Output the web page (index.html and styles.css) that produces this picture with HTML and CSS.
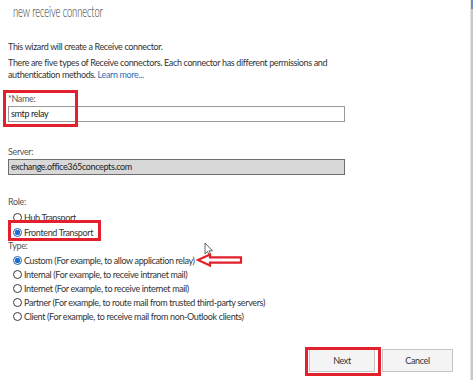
FILE: index.html
```html
<!DOCTYPE html>
<html>
<head>
<meta charset="utf-8">
<link rel="stylesheet" href="styles.css">
</head>
<body>
<div class="window">
  <div class="main">
    <h1 class="title">new receive connector</h1>
    <div class="content">
      <p class="intro">This wizard will create a Receive connector.</p>
      <p class="intro2">There are five types of Receive connectors. Each connector has different permissions and<br>authentication methods. <a class="link">Learn more...</a></p>

      <div class="field name-field">
        <div class="label">*Name:</div>
        <div class="input">smtp relay</div>
        <div class="mark mark-name"></div>
      </div>

      <div class="field server-field">
        <div class="label">Server:</div>
        <div class="input disabled">exchange.office365concepts.com</div>
      </div>

      <div class="group role">
        <div class="label">Role:</div>
        <div class="radio"><span class="dot"></span>Hub Transport</div>
        <div class="radio checked"><span class="dot"></span>Frontend Transport</div>
        <div class="mark mark-role"></div>
        <svg class="cursor" width="10" height="15" viewBox="0 0 10 15"><path d="M1 1 L1 12 L3.5 9.5 L5.5 14 L7 13.3 L5 8.8 L8.5 8.8 Z" fill="#fff" stroke="#555" stroke-width="0.9" stroke-linejoin="round"/></svg>
      </div>

      <div class="group type">
        <div class="label">Type:</div>
        <div class="radio checked"><span class="dot"></span>Custom (For example, to allow application relay)
          <svg class="arrow" width="48" height="14" viewBox="0 0 48 14"><path d="M2 7 L14 1.5 L14 4.3 L45 4.3 L45 9.7 L14 9.7 L14 12.5 Z" fill="#fff" stroke="#e0202a" stroke-width="2.2" stroke-linejoin="miter"/></svg>
        </div>
        <div class="radio"><span class="dot"></span>Internal (For example, to receive intranet mail)</div>
        <div class="radio"><span class="dot"></span>Internet (For example, to receive internet mail)</div>
        <div class="radio"><span class="dot"></span>Partner (For example, to route mail from trusted third-party servers)</div>
        <div class="radio"><span class="dot"></span>Client (For example, to receive mail from non-Outlook clients)</div>
      </div>

      <div class="buttons">
        <div class="btn next">Next<div class="mark mark-next"></div></div>
        <div class="btn">Cancel</div>
      </div>
    </div>
  </div>
  <div class="edge"></div>
</div>
</body>
</html>
```
FILE: styles.css
```css
* { box-sizing: border-box; }
html, body { margin: 0; padding: 0; background: #fff; }
body {
  font-family: Lato, "Open Sans", sans-serif;
  font-size: 9px;
  color: #333;
  width: 474px;
  height: 380px;
  overflow: hidden;
}
.window { display: flex; height: 380px; }
.main { flex: 1; }
.edge {
  width: 3px;
  margin-right: 1px;
  background: linear-gradient(#6a8fc0 0, #6a8fc0 9px, #c9c9c9 9px);
  border-left: 1px solid #e2e2e2;
}
.title {
  margin: 0 0 0 13px;
  height: 22px;
  line-height: 22px;
  font-size: 15px;
  font-weight: 300;
  color: #333;
  letter-spacing: -0.2px;
  white-space: nowrap;
  transform: scaleX(0.63);
  transform-origin: left center;
}
.content { padding: 19px 0 0 8px; letter-spacing: -0.36px; }
p { margin: 0; line-height: 12px; }
.intro { margin-bottom: 4px; }
.link { color: #2f6db5; }

.field { position: relative; width: 337px; }
.name-field { margin-top: 12px; }
.server-field { margin-top: 24px; }
.label { color: #555; line-height: 12px; height: 13px; }
.input {
  height: 16px;
  border: 1px solid #9a9a9a;
  padding-left: 2px;
  line-height: 14px;
  color: #222;
}
.input.disabled { background: #d8d8d8; border-color: #6e6e6e; }

.mark { position: absolute; border: 3px solid #e3202c; }
.mark-name { left: -5px; top: -3px; width: 75px; height: 37px; }

.group { position: relative; }
.role { margin-top: 21px; }
.role .label { margin-bottom: 1px; }
.radio {
  display: flex;
  align-items: center;
  height: 14px;
  padding-left: 5px;
  white-space: nowrap;
  position: relative;
}
.dot {
  width: 9px; height: 9px;
  border: 1px solid #3a3a3a;
  border-radius: 50%;
  margin-right: 2px;
  flex: none;
  display: inline-block;
  background: #fff;
}
.checked .dot { border-color: #1c62b8; background: radial-gradient(circle, #1c6fd0 0 2.6px, #fff 3px); }
.role .radio.checked { height: 16px; }
.mark-role { left: 0; top: 24px; width: 93px; height: 21px; }
.cursor { position: absolute; left: 196px; top: 46px; }

.type .label { height: 13px; }
.type .radio { height: 14px; }
.arrow { position: absolute; left: 188px; top: 0; }

.buttons {
  display: flex;
  gap: 7px;
  margin: 26px 0 0 301px;
}
.btn {
  position: relative;
  width: 66px;
  height: 23px;
  border: 1px solid #c5c5c5;
  background: #f4f4f4;
  text-align: center;
  line-height: 21px;
  color: #333;
}
.btn + .btn { width: 71px; }
.mark-next { left: -5px; top: -3px; width: 76px; height: 29px; }
```
